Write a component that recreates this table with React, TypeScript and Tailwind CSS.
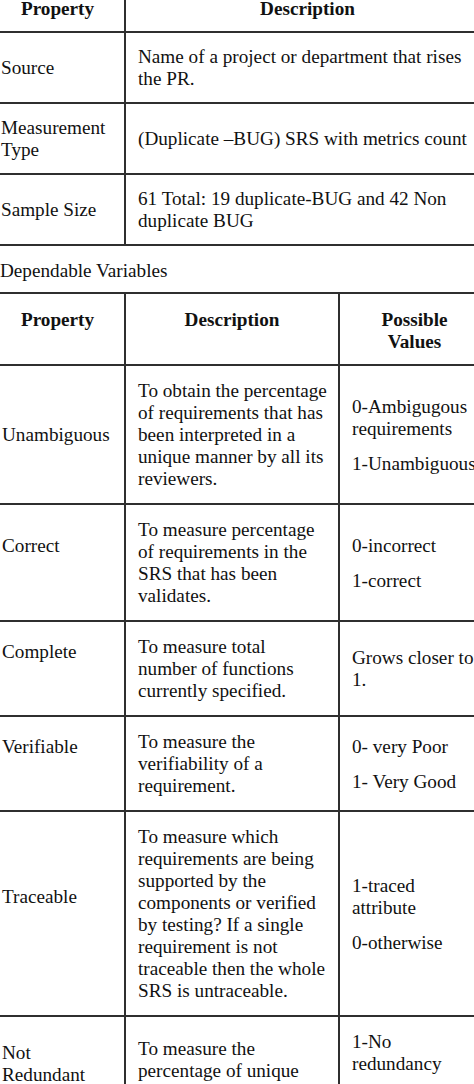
import React from "react";

type Row = {
  prop: string;
  desc: string;
  values: string[];
  spacer: boolean;
};

const rows: Row[] = [
  {
    prop: "Unambiguous",
    desc: "To obtain the percentage of requirements that has been interpreted in a unique manner by all its reviewers.",
    values: ["0-Ambigugous requirements", "1-Unambiguous"],
    spacer: false,
  },
  {
    prop: "Correct",
    desc: "To measure percentage of requirements in the SRS that has been validates.",
    values: ["0-incorrect", "1-correct"],
    spacer: true,
  },
  {
    prop: "Complete",
    desc: "To measure total number of functions currently specified.",
    values: ["Grows closer to 1."],
    spacer: true,
  },
  {
    prop: "Verifiable",
    desc: "To measure the verifiability of a requirement.",
    values: ["0- very Poor", "1- Very Good"],
    spacer: true,
  },
  {
    prop: "Traceable",
    desc: "To measure which requirements are being supported by the components or verified by testing? If a single requirement is not traceable then the whole SRS is untraceable.",
    values: ["1-traced attribute", "0-otherwise"],
    spacer: true,
  },
  {
    prop: "Not Redundant",
    desc: "To measure the percentage of unique requirements in the SRS document.",
    values: ["1-No redundancy", "0-redundant requirements"],
    spacer: true,
  },
];

const cell = "border-2 border-[#2f2f2f] align-middle text-left";
const head =
  "border-2 border-[#2f2f2f] align-top pt-[15px] pb-[11px] px-[12px] font-bold text-center";

export default function App() {
  return (
    <div className="w-[474px] h-[1084px] overflow-hidden bg-white text-[#111] font-['Liberation_Serif','Times_New_Roman',serif] text-[19.2px] leading-[22px]">
      <div className="-mt-[19px] -ml-[11px] w-[500px]">
        <table className="w-[500px] table-fixed border-collapse">
          <colgroup>
            <col className="w-[135px]" />
            <col className="w-[365px]" />
          </colgroup>
          <thead>
            <tr>
              <th className={head}>Property</th>
              <th className={head}>Description</th>
            </tr>
          </thead>
          <tbody>
            <tr>
              <td className={`${cell} pt-[13px] pb-[12px] pl-[10px] pr-[12px]`}>Source</td>
              <td className={`${cell} pt-[13px] pb-[12px] px-[12px]`}>
                Name of a project or department that rises the PR.
              </td>
            </tr>
            <tr>
              <td className={`${cell} pt-[13px] pb-[12px] pl-[10px] pr-[12px]`}>Measurement Type</td>
              <td className={`${cell} pt-[13px] pb-[12px] px-[12px]`}>
                (Duplicate –BUG) SRS with metrics count
              </td>
            </tr>
            <tr>
              <td className={`${cell} pt-[13px] pb-[12px] pl-[10px] pr-[12px]`}>Sample Size</td>
              <td className={`${cell} pt-[13px] pb-[12px] px-[12px]`}>
                61 Total: 19 duplicate-BUG and 42 Non duplicate BUG
              </td>
            </tr>
          </tbody>
        </table>

        <p className="pl-[11px] pt-[14px] pb-[10px]">Dependable Variables</p>

        <table className="w-[500px] table-fixed border-collapse">
          <colgroup>
            <col className="w-[135px]" />
            <col className="w-[214px]" />
            <col className="w-[151px]" />
          </colgroup>
          <thead>
            <tr>
              <th className={head}>Property</th>
              <th className={head}>Description</th>
              <th className={head}>
                Possible
                <br />
                Values
              </th>
            </tr>
          </thead>
          <tbody>
            {rows.map((r) => (
              <tr key={r.prop}>
                <td className={`${cell} pt-[14px] pb-[13px] pl-[11px] pr-[12px]`}>
                  <p>{r.prop}</p>
                  {r.spacer && <div className="h-[35px]" />}
                </td>
                <td className={`${cell} pt-[14px] pb-[13px] pl-[12px] pr-[10px]`}>
                  {r.desc}
                </td>
                <td className={`${cell} pt-[14px] pb-[13px] px-[12px]`}>
                  {r.values.map((v, i) => (
                    <p key={v} className={i > 0 ? "mt-[13px]" : ""}>
                      {v}
                    </p>
                  ))}
                </td>
              </tr>
            ))}
          </tbody>
        </table>
      </div>
    </div>
  );
}
